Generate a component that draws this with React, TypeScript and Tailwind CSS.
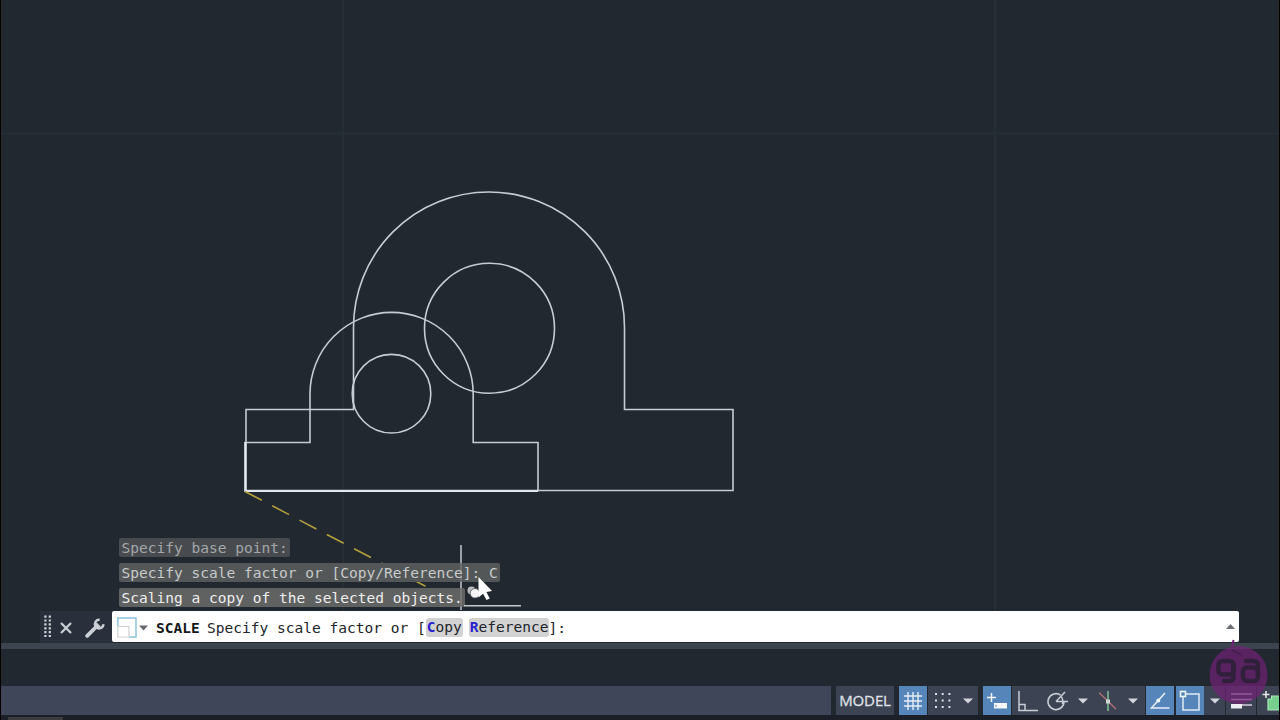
import React from "react";

const MONO = "font-['DejaVu_Sans_Mono',monospace] text-[14.54px] whitespace-pre";
const HISTORY = "relative h-[19px] rounded-[2px] pl-[2.5px] pr-[2px] leading-[20px]";

function Drawing() {
  return (
    <svg className="absolute inset-0" width="1279" height="611" viewBox="1 0 1279 611" fill="none">
      <g stroke="#252d35" strokeWidth="2">
        <path d="M0 133.5H1280M343 0V611M995 0V611" />
      </g>
      <g stroke="#c6ccd5" strokeWidth="1.6">
        <path d="M246 491V409.5H353.5V327.5A135.5 135.5 0 0 1 624.5 327.5V409.5H733V490.5H246" />
        <circle cx="489.5" cy="328.3" r="65" />
        <path d="M245.3 491V442.5H310V394A81.6 81.6 0 0 1 473.2 394V442.5H538V491.2" />
        <circle cx="391.5" cy="393.7" r="39.3" />
      </g>
      <path d="M245.3 442V491H538" stroke="#e3e8ee" strokeWidth="2" />
      <path d="M245 491.5L428 587.5" stroke="#b3a03c" strokeWidth="1.6" strokeDasharray="19 11.8" />
    </svg>
  );
}

function Pointer() {
  return (
    <svg className="absolute left-[439px] top-[540px]" width="100" height="71" viewBox="440 540 100 71">
      <path d="M461 545V563M461 582V588M461 607V610" stroke="#c3c8ce" strokeWidth="1.5" />
      <path d="M461 563V582M461 588V607" stroke="#a9adb0" strokeOpacity=".45" strokeWidth="1.3" />
      <path d="M464 605.8H521" stroke="#c3c8ce" strokeWidth="1.6" />
      <circle cx="471.5" cy="590.5" r="4" fill="#b9bcc0" />
      <circle cx="475" cy="593.3" r="4.8" fill="#f4f4f4" stroke="#454b52" strokeWidth=".8" />
      <path d="M478.5 577V597.5L483 593.8L486.6 600L489.8 598.4L486.4 592L492 591Z" fill="#fff" />
    </svg>
  );
}

function Caret() {
  return (
    <svg width="10" height="6" viewBox="0 0 10 6">
      <path d="M0 0.5H10L5 5.5Z" fill="#d3d6dc" />
    </svg>
  );
}

function CommandRow() {
  return (
    <div className="flex h-8 shrink-0 pl-[39px]">
      <div className="flex w-[72px] items-center bg-[#2a303b]">
        <svg className="-mt-0.5 ml-[4px]" width="8" height="22" viewBox="0 0 8 22">
          <path d="M1.4 .5V22M5.8 .5V22" stroke="#d0d3d9" strokeWidth="2.2" strokeDasharray="2.2 1.7" />
        </svg>
        <svg className="ml-[8px] mt-px" width="12" height="12" viewBox="0 0 12 12">
          <path d="M1 1L11 11M11 1L1 11" stroke="#ccd0d7" strokeWidth="2.2" />
        </svg>
        <svg className="ml-[13px] mt-px" width="20" height="20" viewBox="0 0 20 20" fill="none" stroke="#ccd0d7">
          <path d="M2.2 17.8L11 9" strokeWidth="3.8" strokeLinecap="round" />
          <path d="M14.6 1.8C11 1.6 9 5 10.4 8.2C12 11.5 17.6 11.3 18.6 6.2" strokeWidth="2.4" />
          <path d="M10.6 5.5L14.4 9.4" strokeWidth="3.2" />
        </svg>
      </div>
      <div className="flex h-[31px] w-[1127px] items-center rounded-[2px] bg-white pl-[5px] pr-1">
        <svg className="mt-0.5" width="20" height="21" viewBox="0 0 20 21" fill="none">
          <path d="M.8 9V1H19V20H12" stroke="#8fc3e0" strokeWidth="1.5" />
          <path d="M.8 9V20H12V9.5H1" stroke="#cdd1d3" strokeWidth="1.2" />
        </svg>
        <svg className="ml-[2px] mt-0.5" width="9" height="6" viewBox="0 0 9 6">
          <path d="M0 .5H9L4.5 5.5Z" fill="#666a70" />
        </svg>
        <div className={`${MONO} ml-[8px] flex items-center pt-[4px] leading-[19px] text-[#20242a]`}>
          <span className="w-[51px] font-bold text-[#15181c]">SCALE</span>
          <span>Specify scale factor or [</span>
          <span className="-mt-[2px] rounded-[3px] bg-[#d2d2d2] px-px"><b className="text-[#2a22d0]">C</b>opy</span>
          <span className="-mt-[2px] ml-[6px] rounded-[3px] bg-[#d2d2d2] px-px"><b className="text-[#2a22d0]">R</b>eference</span>
          <span className="-ml-px">]:</span>
        </div>
        <svg className="ml-auto" width="9" height="5" viewBox="0 0 9 5">
          <path d="M0 5H9L4.5 0Z" fill="#6a6d72" />
        </svg>
      </div>
    </div>
  );
}

const CELL = "flex h-full items-center justify-center bg-[#3c4353]";
const ACTIVE = "flex h-full items-center justify-center bg-[#5585b9]";

function StatusBar() {
  return (
    <div className="flex h-[29px] shrink-0">
      <div className="w-[830px] bg-[#404659]" />
      <div className={`${CELL} ml-[5px] w-[58px] font-['Open_Sans',sans-serif] text-[15px] font-medium tracking-[-0.1px] text-[#dfe1e6]`}>
        <span className="[-webkit-text-stroke:0.3px_#dfe1e6]">MODEL</span>
      </div>
      <div className={`${ACTIVE} ml-[5px] w-[28px]`}>
        <svg width="20" height="20" viewBox="0 0 20 20">
          <path d="M5 1V19M10 1V19M15 1V19M1 5H19M1 10H19M1 15H19" stroke="#e6eef7" strokeWidth="1.4" />
        </svg>
      </div>
      <div className={`${CELL} ml-px w-[50px] gap-[11px]`}>
        <svg width="18" height="17" viewBox="0 0 18 17">
          <path d="M1 2H18M1 8.5H18M1 15H18" stroke="#dcdfe5" strokeWidth="2" strokeDasharray="2 4.7" />
        </svg>
        <Caret />
      </div>
      <div className={`${ACTIVE} ml-[5px] w-[28px]`}>
        <svg width="22" height="18" viewBox="0 0 22 18">
          <path d="M5.5 1V10M1 5.5H10" stroke="#eef4fa" strokeWidth="1.5" />
          <rect x="8" y="11" width="13" height="5.5" fill="#f5f8fb" />
          <path d="M10 12.8V15" stroke="#5585b9" />
        </svg>
      </div>
      <div className={`${CELL} ml-px w-[133px] !justify-start`}>
        <svg className="ml-[6px] mr-[9px]" width="20" height="22" viewBox="0 0 20 22" fill="none">
          <path d="M1 1V20.5H20" stroke="#c9cdd5" strokeWidth="1.5" />
          <path d="M1 14.5H7V20.5" stroke="#c9cdd5" strokeWidth="1.5" />
        </svg>
        <svg width="22" height="20" viewBox="0 0 22 20" fill="none">
          <path d="M13.5 4A8 8 0 1 0 17 11" stroke="#c9cdd5" strokeWidth="1.6" />
          <path d="M9 10.5L18 1M9 10.5H21M14 5.5Q16.5 8 15.5 13" stroke="#c9cdd5" strokeWidth="1.5" />
        </svg>
        <span className="ml-[9px] mr-px flex"><Caret /></span>
        <svg className="ml-[10px]" width="18" height="20" viewBox="0 0 18 20">
          <path d="M0 1.5L17 18" stroke="#b46f79" strokeWidth="1.3" />
          <path d="M9 0V20" stroke="#7fb893" strokeWidth="1.6" />
          <rect x="7" y="8.5" width="4" height="4" fill="#cfd6d3" />
        </svg>
        <span className="ml-[11px] flex"><Caret /></span>
      </div>
      <div className={`${ACTIVE} ml-px w-[28px]`}>
        <svg width="20" height="18" viewBox="0 0 20 18" fill="none">
          <path d="M15 1L1.5 16H19.5" stroke="#e9f0f8" strokeWidth="1.5" />
          <circle cx="8.3" cy="8.6" r="2" fill="#f4f8fb" />
        </svg>
      </div>
      <div className={`${ACTIVE} ml-[2px] w-[28px]`}>
        <svg width="22" height="22" viewBox="0 0 22 22" fill="none">
          <path d="M7 4H20V20H4V7" stroke="#dfeaf5" strokeWidth="1.5" />
          <rect x="1.5" y="1.5" width="5" height="5" stroke="#f1f6fb" strokeWidth="1.6" />
        </svg>
      </div>
      <div className={`${CELL} w-[21px]`}><Caret /></div>
      <div className={`${CELL} ml-px w-[30px]`}>
        <svg width="21" height="18" viewBox="0 0 21 18">
          <path d="M0 2H21M0 7.5H21M10 13H21" stroke="#d5cfdc" strokeWidth="1.7" />
          <rect x="0" y="12" width="11" height="4.5" fill="#eeedf2" />
        </svg>
      </div>
      <div className={`${CELL} ml-px flex-1 !justify-end`}>
        <svg width="17" height="22" viewBox="0 0 17 22">
          <path d="M4 1V8M.5 4.5H7.5" stroke="#e2e5e8" strokeWidth="1.6" />
          <path d="M17 6H9.5V9H6V20H17" fill="#77cf8f" stroke="#a9e6b8" strokeWidth="1.2" />
        </svg>
      </div>
    </div>
  );
}

function Watermark() {
  return (
    <svg className="absolute left-[1205px] top-[638px]" width="66" height="68" viewBox="1206 638 66 68" fill="none">
      <circle cx="1238.5" cy="675" r="29" fill="#742079" fillOpacity=".68" />
      <path d="M1233.5 640L1232 647" stroke="#6f1f78" strokeWidth="2" />
      <path d="M1232 650L1241 655" stroke="#42204f" strokeWidth="1.6" />
      <g stroke="#30203c" strokeWidth="4.4" strokeLinecap="round">
        <rect x="1218.5" y="661" width="15" height="13.5" rx="4" />
        <path d="M1233.5 667V677Q1233.5 681 1229 681H1224" />
        <rect x="1243" y="667.5" width="15" height="13.5" rx="4" />
        <path d="M1258 676V665.5Q1258 661 1253.5 661H1246" />
      </g>
    </svg>
  );
}

export default function App() {
  return (
    <div className="relative flex h-[720px] w-[1280px] flex-col overflow-hidden border-x border-black bg-[#212830]">
      <div className="relative flex h-[611px] shrink-0 flex-col items-start justify-end gap-[6px] pb-[4px] pl-[118px]">
        <Drawing />
        <div className={`${MONO} ${HISTORY} bg-[#474b50] text-[#a4a6a8]`}>Specify base point:</div>
        <div className={`${MONO} ${HISTORY} bg-[#535758] text-[#c8caca]`}>Specify scale factor or [Copy/Reference]: C</div>
        <div className={`${MONO} ${HISTORY} bg-[#606161] text-[#eeeeee]`}>Scaling a copy of the selected objects.</div>
        <Pointer />
      </div>
      <CommandRow />
      <div className="h-[6px] shrink-0 bg-[#3b444f]" />
      <div className="h-[37px] shrink-0" />
      <StatusBar />
      <div className="flex-1 bg-[#1b2028] pl-[7px] pt-[2px]">
        <div className="h-full w-[55px] bg-[#3a3c40]" />
      </div>
      <Watermark />
    </div>
  );
}
